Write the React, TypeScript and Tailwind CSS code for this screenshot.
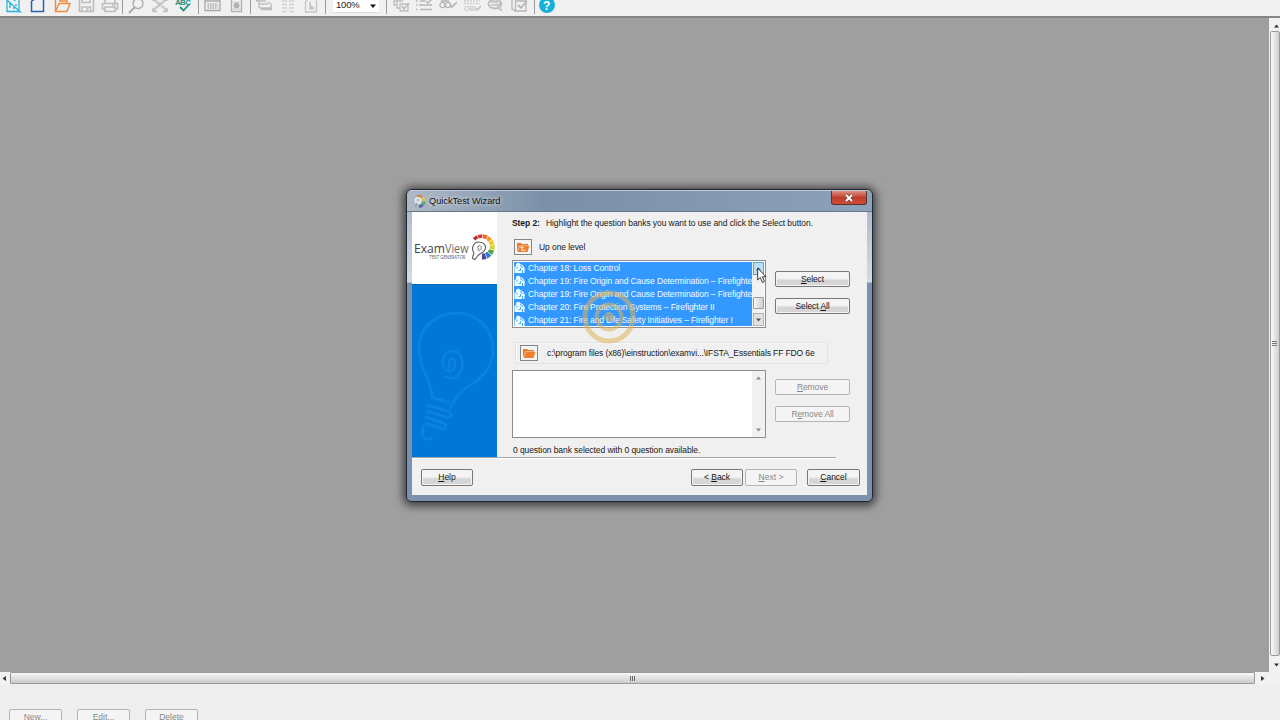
import type { ReactNode } from "react";
import clsx from "clsx";

const chapters = [
  "Chapter 18: Loss Control",
  "Chapter 19: Fire Origin and Cause Determination – Firefighter I",
  "Chapter 19: Fire Origin and Cause Determination – Firefighter II",
  "Chapter 20: Fire Protection Systems – Firefighter II",
  "Chapter 21: Fire and Life Safety Initiatives – Firefighter I",
];

const wheel = ["#b5322c", "#d9372c", "#ee6a26", "#f59a23", "#f6c51e", "#d5cf2a", "#4fa548", "#2b7fc3", "#54439b"];

const ToolIcon = ({
  color = "#bdbdbd",
  wide,
  narrow,
  children,
}: {
  color?: string;
  wide?: boolean;
  narrow?: boolean;
  children: ReactNode;
}) => (
  <div className={clsx("flex shrink-0 justify-center", wide ? "w-[25px]" : narrow ? "w-[23.6px]" : "w-6")}>
    <svg width="20" height="16" viewBox="0 0 20 16" fill="none" stroke={color} strokeWidth="1.3">
      {children}
    </svg>
  </div>
);

const Separator = () => <div className="h-[14px] w-px shrink-0 bg-[#9c9c9c]" />;

const Toolbar = () => (
  <div className="flex h-[18px] shrink-0 items-start overflow-hidden border-b-2 border-[#858585] bg-[#f0f0f0]">
    <ToolIcon color="#27b4d8" wide>
      <path d="M4 -2V11.500H16V-2M4 0L18 12.500M7 3v5M10 8h2M11 1l2-2M13 4v2" />
    </ToolIcon>
    <ToolIcon color="#2b62b0">
      <path d="M4.500 1V11.500H16.500V-2M4.500 1L8 -1" strokeWidth="1.500" />
    </ToolIcon>
    <ToolIcon color="#f08a3c" wide>
      <path d="M3.500 11V-1H8V1H15V3M3.500 11.500L7 3.500H18L15 11.500Z" strokeWidth="1.400" />
    </ToolIcon>
    <ToolIcon>
      <path d="M3.500 -1V11.500H17.500V-1M6 -1V2.500H14V-1M6 11.500V7H14.500V11.500M11.500 8V11" strokeWidth="1.600" />
    </ToolIcon>
    <ToolIcon>
      <path d="M5 3V-1H15V3M5 9H2.500V3.500H17.500V9H15M5 7H15V11.500H5Z" strokeWidth="1.600" />
      <path d="M12 5h3" />
    </ToolIcon>
    <Separator />
    <ToolIcon wide color="#aaaaaa">
      <circle cx="12" cy="3.500" r="5" />
      <path d="M8.500 7.500L3 13" strokeWidth="1.800" />
    </ToolIcon>
    <ToolIcon>
      <path d="M3 -1L17 11M17 -1L3 11M3 8V11.500H7M17 8V11.500H13M3 1V-1M17 1V-1" />
      <path d="M5 -1L18 10M15 -1L2 10" strokeWidth=".7" />
    </ToolIcon>
    <ToolIcon color="#26917f">
      <text x="1" y="5" fontSize="8" stroke="none" fill="#26917f" fontFamily="Liberation Sans" fontWeight="bold" textLength="16">
        ABC
      </text>
      <path d="M6 7L9.500 10.500L15 4.500" strokeWidth="1.800" />
    </ToolIcon>
    <div className="w-[2px] shrink-0" />
    <Separator />
    <ToolIcon wide color="#a9a9a9">
      <path d="M3 -1V10.500H18V-1M3 1H18" />
      <path d="M5.500 4H16M5.500 6H16M5.500 8H16" strokeDasharray="1.500 1" />
    </ToolIcon>
    <ToolIcon color="#b2b2b2">
      <path d="M5.500 -1V11.500H15.500V-1" />
      <path d="M5.500 2h10M5.500 9h10" strokeWidth=".5" />
      <circle cx="10.500" cy="5.500" r="2.400" fill="#b2b2b2" />
    </ToolIcon>
    <div className="w-[2px] shrink-0" />
    <Separator />
    <ToolIcon wide>
      <path d="M2 1H12M5 4H14M6 8H18M5 1V7L8 9.500H18M14 2L17 4V8M2 1L5 -1" />
    </ToolIcon>
    <ToolIcon color="#d2d2d2">
      <path d="M4 1H9M11 1H16M4 4.500H9M11 4.500H16M4 8H9M11 8H16M4 11.500H9M11 11.500H16" />
    </ToolIcon>
    <ToolIcon color="#c5c5c5">
      <path d="M3.500 2V12H14.500V0M3.500 2L6 -1" />
      <path d="M8 2V8.500H12M8 5.500L11 8" strokeWidth="1.800" />
    </ToolIcon>
    <div className="w-px shrink-0" />
    <Separator />
    <div className="mr-[7px] ml-[7px] flex h-[13px] w-[46px] shrink-0 items-start justify-between border-b border-[#dddddd] bg-white pr-[3px] pl-[3px] text-[9.5px] text-[#222222]">
      <span className="leading-[10px] tracking-[-0.2px]">100%</span>
      <svg width="6" height="4" viewBox="0 0 6 4" className="mt-[4px]">
        <path d="M0 .5H6L3 4Z" fill="#111" />
      </svg>
    </div>
    <Separator />
    <div className="w-[2px] shrink-0" />
    <ToolIcon narrow>
      <path d="M3 -1V5H6M6 1V8H9M9 4H17V11H9ZM3 1H12" />
      <path d="M11 6L13 9L18 3" strokeWidth="1.600" />
    </ToolIcon>
    <ToolIcon narrow color="#b5b5b5">
      <path d="M6 1H11M5 5H18M6 9.500H18M2 5h1.500M2 9.500h1.500M2 1h1.500" />
      <path d="M12 1L14 3L18 -1" />
    </ToolIcon>
    <ToolIcon narrow color="#b5b5b5">
      <circle cx="4.500" cy="5" r="2.600" />
      <circle cx="10" cy="5" r="2.600" />
      <path d="M3 1H11M12 5L14 7L19 2" strokeWidth="1.700" />
    </ToolIcon>
    <ToolIcon narrow color="#cfcfcf">
      <path d="M2 1H18M2 3.500H18" strokeDasharray="2 1" />
      <text x="2" y="11" fontSize="7" stroke="none" fill="#bdbdbd" fontFamily="Liberation Sans">OBI</text>
      <path d="M14 8L15.500 10L19 6" stroke="#bdbdbd" />
    </ToolIcon>
    <ToolIcon narrow>
      <ellipse cx="10" cy="4" rx="6.500" ry="4.500" strokeWidth="1.800" />
      <path d="M6 2H13M6 5H11M11 4L13 6L16 2M13 8L17 10.500" strokeWidth="1.600" />
    </ToolIcon>
    <ToolIcon narrow color="#b5b5b5">
      <path d="M3 -1V9L6 11M6.500 1H17V11H6.500Z" />
      <path d="M9 5L12 8L18 1" strokeWidth="1.800" />
    </ToolIcon>
    <div className="w-[3px] shrink-0" />
    <Separator />
    <div className="ml-[4px] flex h-[13px] w-4 shrink-0 items-end">
      <div className="flex h-4 w-4 shrink-0 items-center justify-center rounded-full bg-[#16b1d8] pt-[1px] text-[12px] leading-[12px] font-bold text-white">?</div>
    </div>
  </div>
);

const Arrow = ({ up, color = "#555" }: { up?: boolean; color?: string }) => (
  <svg width="5" height="4" viewBox="0 0 5 4" className={clsx("shrink-0", up && "rotate-180")}>
    <path d="M0 .5H5L2.500 3.500Z" fill={color} />
  </svg>
);

const VerticalScroll = () => (
  <div className="flex w-[11px] shrink-0 flex-col items-center bg-[#f1f1f1] pb-[4px]">
    <div className="flex h-[13px] shrink-0 items-center justify-center pt-[2px] pl-[3px]">
      <Arrow up color="#333" />
    </div>
    <div className="flex w-[10px] flex-1 flex-col items-center justify-center gap-px rounded-[2px] border border-[#9b9b9b] bg-linear-to-r from-[#fafafa] to-[#cfcfd3]">
      <i className="h-px w-[5px] bg-[#777777]" />
      <i className="h-px w-[5px] bg-[#777777]" />
      <i className="h-px w-[5px] bg-[#777777]" />
    </div>
    <div className="flex h-[12px] shrink-0 items-center pt-[5px] pl-[3px]">
      <Arrow color="#333" />
    </div>
  </div>
);

const Button = ({ children, disabled, className }: { children: ReactNode; disabled?: boolean; className?: string }) => (
  <button
    className={clsx(
      "flex shrink-0 justify-center rounded-[2px] border pt-px text-[8.5px] leading-[12px]",
      disabled
        ? "border-[#b4b4b4] bg-[#f4f4f4] text-[#888888]"
        : "border-[#777777] bg-linear-to-b from-[#f4f4f4] from-45% to-[#d6d6d6] to-60% text-[#161616] shadow-[inset_0_0_0_1px_#f4f4f4]",
      className
    )}
  >
    <span className="whitespace-pre">{children}</span>
  </button>
);

const Folder = ({ up }: { up?: boolean }) => (
  <div className="flex h-4 w-[18px] shrink-0 items-center justify-center border border-[#858585] bg-[#f4f4f4]">
    <svg width="14" height="12" viewBox="0 0 14 12">
      <path d="M1 2H5L6 3H12V5H4L2 10H1Z" fill="#e9772b" />
      <path d="M3.800 4.800H13.500L11.500 11H1.500Z" fill="#f0802f" />
      <path d="M1.500 10L3.600 4.500H12" stroke="#fbd9bd" strokeWidth=".6" fill="none" />
      {up && <path d="M6 9.500V6M4.300 7L6 5.300L7.700 7M6 9.300H9.500" stroke="#fff2e4" strokeWidth="1" fill="none" />}
    </svg>
  </div>
);

const BankIcon = () => (
  <svg width="11" height="12" viewBox="0 0 11 12" className="shrink-0">
    <path d="M.5 5L2 4V2L4 .5L6 1.500V4L10.500 7V11H.5Z" fill="#eafcff" />
    <path d="M6 2.500Q10 4 10.300 8" stroke="#eafcff" strokeWidth="1.200" fill="none" />
    <path d="M3 4.500V6.500M6.500 6V8.500H4.500M8.500 8V11" stroke="#35a5e4" strokeWidth=".9" fill="none" />
  </svg>
);

const wedge = (i: number) => {
  const a = ((-136 + i * 25.5) * Math.PI) / 180;
  const b = ((-136 + i * 25.5 + 22) * Math.PI) / 180;
  const inner = 9.5 - i * 0.35;
  const p = (r: number, t: number) => `${70 + r * Math.cos(t)} ${16 + r * Math.sin(t)}`;
  return `M${p(inner, a)}L${p(12.8, a)}L${p(12.8, b)}L${p(inner, b)}Z`;
};

const Logo = () => (
  <svg width="85" height="34" viewBox="0 0 85 34" fontFamily="Open Sans, sans-serif">
    {wheel.map((color, i) => (
      <path key={color} d={wedge(i)} fill={color} />
    ))}
    <text x="2" y="22" fontSize="12.500" fill="#3f3f3f" textLength="31" lengthAdjust="spacingAndGlyphs">Exam</text>
    <text x="33" y="22" fontSize="12.500" fill="#6a6a6a" textLength="23.500" lengthAdjust="spacingAndGlyphs">View</text>
    <text x="17.500" y="28" fontSize="4.500" fill="#555" textLength="36" lengthAdjust="spacingAndGlyphs">TEST GENERATOR</text>
    <path d="M62 22.500C59 18 61 11 67 11C72 11 74.500 15 73 18.500C71 22.500 68 22 65.500 25L63 28.500L60.500 27.500L61 24.500Z" fill="#fff" stroke="#5e5e5e" strokeWidth="1.100" />
    <path d="M65.500 19C69 20 70.500 16.500 68.500 15C66 14 64.500 17.500 67 17.800" fill="none" stroke="#5e5e5e" strokeWidth=".9" />
  </svg>
);

const Bulb = () => (
  <svg width="85" height="173" viewBox="0 0 85 173" fill="none" stroke="#198aea" strokeWidth="3" opacity=".5">
    <path d="M20 113C20 96 9 88 7 66C5 44 24 28 44 28C66 28 81 44 81 65C81 84 67 96 55 102C46 107 42 117 38 124" />
    <path d="M33 91C46 99 52 82 50 74C48 63 32 63 31 75C30 88 42 90 43 80C44 73 37 71 37 79V84" strokeWidth="2.600" />
    <path d="M19 112L38 118M14 120L36 126C42 130 38 133 34 132L15 126M13 132L31 138C37 141 33 145 28 143L13 138M12 140C8 150 12 157 21 153" />
  </svg>
);

const DialogIcon = () => (
  <svg width="13" height="13" viewBox="0 0 13 13" fill="none" strokeWidth="2.800">
    <path d="M4 2A4.500 4.500 0 0 1 9 2.500" stroke="#d68145" />
    <path d="M9 2.500A4.500 4.500 0 0 1 11 6.500" stroke="#d9c85d" />
    <path d="M11 6.500A4.500 4.500 0 0 1 9.500 10" stroke="#58a569" />
    <path d="M9.500 10A4.500 4.500 0 0 1 6 11.500" stroke="#5668af" />
    <circle cx="5" cy="5.500" r="3.200" fill="#dadfe4" stroke="#e6ebef" strokeWidth="1" />
    <path d="M4 8L2.500 12M5 4V6" stroke="#8f97a3" strokeWidth="1.200" />
  </svg>
);

const QuickTestWizard = () => (
  <div className="absolute top-[189px] left-[406px] flex h-[313px] w-[467px] flex-col overflow-hidden rounded-[6px] border border-[#20262f] bg-[#8295ae] bg-linear-to-b from-[#8499b2] to-[#7b90ad] shadow-[0_1px_9px_3px_rgba(0,0,0,0.6)]">
    <div className="flex h-[22px] shrink-0 items-start justify-between border-t border-b border-t-[#c2cdda] border-b-[#65758a] bg-linear-to-r from-[#b0bac6] via-[#7a8fa8] via-30% to-[#8da1b9] pr-[5px] pl-[6px]">
      <div className="flex h-[20px] items-center gap-[3px]">
        <DialogIcon />
        <span className="text-[9.2px] leading-[12px] text-[#111111] [text-shadow:0_0_4px_#ffffff]">QuickTest Wizard</span>
      </div>
      <button className="flex h-[14px] w-9 items-center justify-center rounded-b-[3px] border border-t-0 border-[#57302f] bg-linear-to-b from-[#dc8f83] via-[#bf3e2c] via-50% to-[#cf4b32]">
        <svg width="10" height="8" viewBox="0 0 10 8">
          <path d="M2 1L8 7M8 1L2 7" stroke="#5a3a3a" strokeWidth="3.200" />
          <path d="M2 1L8 7M8 1L2 7" stroke="#fff" strokeWidth="2" />
        </svg>
      </button>
    </div>
    <div className="flex min-h-0 flex-1 bg-[linear-gradient(#aebdcc,#d3dce4_70px,#7c91ae_71px)] px-[5px] pb-[6px]">
      <div className="flex flex-1 flex-col bg-[#f0f0f0]">
        <div className="flex h-[245px] shrink-0">
          <div className="flex w-[85px] shrink-0 flex-col">
            <div className="flex h-[72px] items-center bg-white pb-[1px]">
              <Logo />
            </div>
            <div className="h-[173px] border-t border-[#0069ba] bg-[#0078d7]">
              <Bulb />
            </div>
          </div>
          <div className="flex flex-1 flex-col pl-[15px] text-[8.5px] leading-[12px] tracking-[-0.08px] text-[#181818]">
            <div className="mt-[5px] flex h-3 items-center gap-[7px] whitespace-nowrap">
              <b className="w-[27px]">Step 2:</b>
              <span>Highlight the question banks you want to use and click the Select button.</span>
            </div>
            <div className="mt-[9px] flex h-[17px] items-center gap-[7px] pl-[2px]">
              <Folder up />
              <span>Up one level</span>
            </div>
            <div className="mt-[5px] flex gap-[9px]">
              <div className="flex h-[68px] w-[254px] border border-[#8d8d8d] bg-white p-px">
                <div className="min-w-0 flex-1 overflow-hidden bg-[#3399ff] text-[#f4faff]">
                  {chapters.map((chapter, i) => (
                    <div key={chapter} className={clsx("flex h-[13px] items-start gap-[3px]", i === 4 && "border-t border-dotted border-[#9c7b52]")}>
                      <BankIcon />
                      <span className={clsx("tracking-[-0.1px] whitespace-nowrap", i === 4 && "-mt-px")}>{chapter}</span>
                    </div>
                  ))}
                </div>
                <div className="flex w-[12px] shrink-0 flex-col items-center justify-between bg-[#f2f2f2]">
                  <div className="flex h-[13px] w-[11px] items-center justify-center border border-[#5aa8d2] bg-[#b9e1f6]">
                    <Arrow up color="#244b5d" />
                  </div>
                  <div className="flex flex-col gap-[4px]">
                    <div className="h-[12px] w-[11px] rounded-[1px] border border-[#9b9b9b] bg-linear-to-r from-[#f5f5f5] to-[#d0d0d0]" />
                    <div className="flex h-[13px] w-[11px] items-center justify-center border border-[#b4b4b4] bg-[#e2e2e2]">
                      <Arrow />
                    </div>
                  </div>
                </div>
              </div>
              <div className="flex flex-col gap-[11px] pt-[11px]">
                <Button className="h-4 w-[75px]"><u>S</u>elect</Button>
                <Button className="h-4 w-[75px]">Select <u>A</u>ll</Button>
              </div>
            </div>
            <div className="mt-[14px] ml-[3px] flex h-[22px] w-[313px] items-center gap-[9px] border border-[#e3e3e3] pl-[4px] shadow-[inset_1px_1px_0_#f8f8f8]">
              <Folder />
              <span className="tracking-[-0.12px] whitespace-nowrap">c:\program files (x86)\einstruction\examvi...\IFSTA_Essentials FF FDO 6e</span>
            </div>
            <div className="mt-[6px] flex gap-[9px]">
              <div className="flex h-[68px] w-[254px] justify-end border border-[#8d8d8d] bg-white">
                <div className="flex w-[13px] flex-col items-center justify-between bg-[#f0f0f0] py-[5px]">
                  <Arrow up color="#858585" />
                  <Arrow color="#858585" />
                </div>
              </div>
              <div className="flex flex-col gap-[11px] pt-[9px]">
                <Button disabled className="h-4 w-[75px]"><u>R</u>emove</Button>
                <Button disabled className="h-4 w-[75px]">R<u>e</u>move All</Button>
              </div>
            </div>
            <span className="mt-[6px] ml-px">0 question bank selected with 0 question available.</span>
          </div>
        </div>
        <div className="h-[2px] w-[424px] shrink-0 border-t border-b border-t-[#a5a5a5] border-b-white" />
        <div className="flex flex-1 items-start pt-[10px] pr-[7px] pl-[9px]">
          <Button className="h-[17px] w-[52px]"><u>H</u>elp</Button>
          <div className="ml-auto flex gap-[2px]">
            <Button className="h-[17px] w-[52px]">{"< "}<u>B</u>ack</Button>
            <Button disabled className="h-[17px] w-[52px]"><u>N</u>ext {">"}</Button>
          </div>
          <Button className="ml-[10px] h-[17px] w-[53px]"><u>C</u>ancel</Button>
        </div>
      </div>
    </div>
  </div>
);

export default function App() {
  return (
    <div className="relative flex h-[720px] w-[1280px] flex-col overflow-hidden bg-[#eeeeee] font-['Liberation_Sans',Arial,sans-serif]">
      <Toolbar />
      <div className="flex h-[654px] shrink-0">
        <div className="flex-1 bg-[#9f9f9f]" />
        <VerticalScroll />
      </div>
      <div className="flex h-[13px] shrink-0 items-start bg-[#f1f1f1]">
        <div className="flex h-[12px] w-[10px] items-center justify-center pr-[3px]">
          <svg width="4" height="5" viewBox="0 0 4 5"><path d="M4 0V5L.5 2.500Z" fill="#333" /></svg>
        </div>
        <div className="flex h-[12px] w-[1245px] items-center justify-center gap-px rounded-[1px] border border-[#999999] bg-linear-to-b from-[#f6f6f6] to-[#cbcbcb]">
          <i className="h-[5px] w-px bg-[#666666]" />
          <i className="h-[5px] w-px bg-[#666666]" />
          <i className="h-[5px] w-px bg-[#666666]" />
        </div>
        <svg width="4" height="5" viewBox="0 0 4 5" className="mt-[4px] ml-[6px]"><path d="M0 0V5L3.500 2.500Z" fill="#333" /></svg>
      </div>
      <div className="mt-[24px] flex gap-[15px] pl-[9px]">
        <Button disabled className="h-[17px] w-[53px]">New...</Button>
        <Button disabled className="h-[17px] w-[53px]">Edit...</Button>
        <Button disabled className="h-[17px] w-[53px]">Delete</Button>
      </div>
      <QuickTestWizard />
      <svg className="absolute top-[290px] left-[582px]" width="54" height="54" viewBox="0 0 54 54" fill="none" stroke="#e0b45c" opacity=".55">
        <circle cx="27" cy="27" r="24" strokeWidth="5" />
        <circle cx="27" cy="27" r="12.500" strokeWidth="4" />
        <circle cx="27" cy="27" r="5" fill="#e0b45c" stroke="none" />
      </svg>
      <svg className="absolute top-[267px] left-[757px]" width="10" height="17" viewBox="0 0 10 17">
        <path d="M.7 1V13L3.300 10.500L5.400 15.500L7.500 14.500L5.400 9.800H9Z" fill="#fff" stroke="#222" strokeWidth=".9" />
      </svg>
    </div>
  );
}
